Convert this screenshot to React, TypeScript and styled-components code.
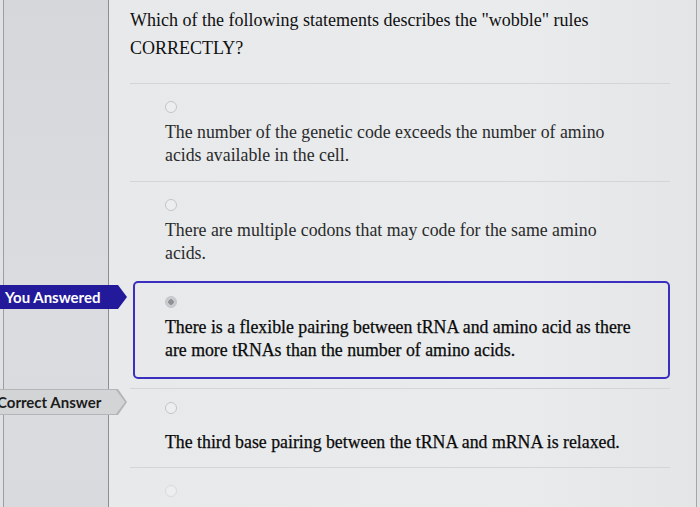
import React from "react";
import styled, { createGlobalStyle, css } from "styled-components";

const GlobalStyle = createGlobalStyle`
  html, body { margin: 0; padding: 0; background: #e3e5e7; }
  * { box-sizing: border-box; }
`;

const Page = styled.div`
  display: flex;
  width: 700px;
  height: 507px;
  overflow: hidden;
  background: #dfe1e3;
`;

const Gutter = styled.div`
  flex: 0 0 106px;
  margin-left: 3px;
  border-left: 1px solid #9c9ea1;
  border-right: 1px solid #8c8e91;
  background: linear-gradient(180deg, #d5d7da 0%, #dadcdf 60%, #d8dadd 100%);
`;

const Main = styled.div`
  flex: 1;
  position: relative;
  margin-right: 3px;
  border-right: 1px solid #a4a6a9;
  background: linear-gradient(90deg, #e7e9eb 0%, #e9ebed 70%, #e3e5e7 100%);
  padding: 6px 0 0 21px;
  font-family: "Liberation Serif", "Times New Roman", serif;
  color: #151515;
`;

const Question = styled.div`
  font-size: 18px;
  line-height: 28px;
  color: #101010;
`;

const AnswerList = styled.div`
  width: 540px;
  margin-top: 21px;
`;

const Row = styled.div<{ $selected?: boolean; $tight?: boolean }>`
  position: relative;
  display: flex;
  flex-direction: column;
  gap: ${(p) => (p.$tight ? "17px" : "8px")};
  border-top: 1px solid #d3d5d7;
  padding: ${(p) => (p.$tight ? "13px 0 13px 35px" : "17px 0 14px 35px")};
  ${(p) =>
    p.$selected &&
    css`
      border: 2px solid #3a2fbf;
      border-radius: 5px;
      margin: 2px 0 9px 3px;
      padding: 13px 0 15px 30px;
      gap: 8px;
    `}
`;

const Radio = styled.span<{ $checked?: boolean; $faint?: boolean }>`
  display: block;
  width: 12px;
  height: 12px;
  border-radius: 50%;
  border: 1px solid ${(p) => (p.$faint ? "#d8dadc" : "#c3c5c8")};
  background: ${(p) =>
    p.$checked
      ? "radial-gradient(circle, #8f9196 0 2.5px, #c9cbce 3px)"
      : "#eceef0"};
`;

const AnswerText = styled.div<{ $strong?: boolean }>`
  font-size: 17.8px;
  line-height: 23px;
  white-space: nowrap;
  color: ${(p) => (p.$strong ? "#0a0a0a" : "#2a2a2a")};
  ${(p) =>
    p.$strong &&
    css`
      -webkit-text-stroke: 0.25px #0a0a0a;
    `}
`;

const Tag = styled.div<{ $variant: "answered" | "correct" }>`
  position: absolute;
  width: 127px;
  height: ${(p) => (p.$variant === "answered" ? "24px" : "26px")};
  left: ${(p) => (p.$variant === "answered" ? "-135px" : "-130px")};
  top: ${(p) => (p.$variant === "answered" ? "2px" : "0px")};
  clip-path: polygon(0 0, 118px 0, 127px 50%, 118px 100%, 0 100%);
  background: ${(p) => (p.$variant === "answered" ? "#22199b" : "#b3b5b8")};
  font-family: Lato, "Open Sans", sans-serif;
  font-weight: 700;
  font-size: 15px;
  overflow: hidden;
`;

const TagFace = styled.div<{ $variant: "answered" | "correct" }>`
  position: absolute;
  inset: ${(p) => (p.$variant === "answered" ? "0" : "1px 1px 1px 0")};
  clip-path: polygon(0 0, 116px 0, 125px 50%, 116px 100%, 0 100%);
  background: ${(p) => (p.$variant === "answered" ? "#22199b" : "#d2d4d6")};
  color: ${(p) => (p.$variant === "answered" ? "#ffffff" : "#1c1c1c")};
  display: flex;
  align-items: center;
  padding-left: ${(p) => (p.$variant === "answered" ? "5px" : "0")};
  text-indent: ${(p) => (p.$variant === "answered" ? "0" : "-3px")};
  white-space: nowrap;
`;

type Answer = {
  lines: string[];
  checked?: boolean;
  selected?: boolean;
  strong?: boolean;
  tight?: boolean;
  tag?: "answered" | "correct";
  faint?: boolean;
};

const answers: Answer[] = [
  {
    lines: [
      "The number of the genetic code exceeds the number of amino",
      "acids available in the cell.",
    ],
  },
  {
    lines: [
      "There are multiple codons that may code for the same amino",
      "acids.",
    ],
  },
  {
    lines: [
      "There is a flexible pairing between tRNA and amino acid as there",
      "are more tRNAs than the number of amino acids.",
    ],
    checked: true,
    selected: true,
    strong: true,
    tag: "answered",
  },
  {
    lines: ["The third base pairing between the tRNA and mRNA is relaxed."],
    strong: true,
    tight: true,
    tag: "correct",
  },
  { lines: [], faint: true },
];

const tagLabel = { answered: "You Answered", correct: "Correct Answer" };

export default function App() {
  return (
    <>
      <GlobalStyle />
      <Page>
        <Gutter />
        <Main>
          <Question>
            Which of the following statements describes the "wobble" rules
            <br />
            CORRECTLY?
          </Question>
          <AnswerList>
            {answers.map((a, i) => (
              <Row key={i} $selected={a.selected} $tight={a.tight}>
                {a.tag && (
                  <Tag $variant={a.tag}>
                    <TagFace $variant={a.tag}>{tagLabel[a.tag]}</TagFace>
                  </Tag>
                )}
                <Radio $checked={a.checked} $faint={a.faint} />
                {a.lines.length > 0 && (
                  <AnswerText $strong={a.strong}>
                    {a.lines.map((l, j) => (
                      <React.Fragment key={j}>
                        {j > 0 && <br />}
                        {l}
                      </React.Fragment>
                    ))}
                  </AnswerText>
                )}
              </Row>
            ))}
          </AnswerList>
        </Main>
      </Page>
    </>
  );
}
